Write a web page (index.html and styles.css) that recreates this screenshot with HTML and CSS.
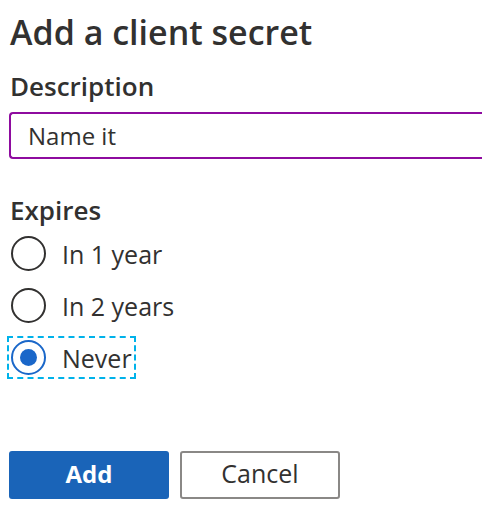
FILE: index.html
```html
<!DOCTYPE html>
<html>
<head>
<meta charset="utf-8">
<link rel="stylesheet" href="styles.css">
</head>
<body>
<div class="panel">
  <h1 class="title">Add a client secret</h1>
  <label class="label" for="desc">Description</label>
  <div class="input"><span class="input-text">Name it</span></div>
  <div class="label expires">Expires</div>
  <div class="radios">
    <div class="radio"><span class="circle"></span><span class="radio-text">In 1 year</span></div>
    <div class="radio"><span class="circle"></span><span class="radio-text">In 2 years</span></div>
    <div class="radio checked focused"><span class="circle"><span class="dot"></span></span><span class="radio-text">Never</span></div>
  </div>
  <div class="buttons">
    <button class="btn primary">Add</button>
    <button class="btn secondary">Cancel</button>
  </div>
</div>
</body>
</html>
```
FILE: styles.css
```css
html, body {
  margin: 0;
  padding: 0;
  background: #ffffff;
  overflow: hidden;
}
.panel {
  font-family: "Open Sans", "Noto Sans", sans-serif;
  color: #323130;
  padding: 0 0 0 9px;
}
.title {
  margin: 0;
  font-size: 34px;
  font-weight: 600;
  line-height: 40px;
  padding-top: 12px;
  padding-left: 1px;
  color: #323130;
}
.label {
  display: block;
  font-size: 26px;
  font-weight: 600;
  line-height: 32px;
  padding-left: 1px;
  margin-top: 18px;
}
.input {
  margin-top: 10px;
  height: 43px;
  border: 2px solid #8e0b9f;
  border-right: none;
  border-radius: 4px 0 0 4px;
  display: flex;
  align-items: center;
  padding-left: 17px;
}
.input-text {
  font-size: 24px;
}
.expires {
  margin-top: 35px;
}
.radios {
  display: flex;
  flex-direction: column;
  gap: 13px;
  margin-top: 8px;
}
.radio {
  display: flex;
  align-items: center;
  gap: 16px;
  height: 39px;
  padding-left: 2px;
  padding-right: 2px;
  width: max-content;
  box-sizing: border-box;
}
.circle {
  width: 35px;
  height: 35px;
  border: 2px solid #323130;
  border-radius: 50%;
  box-sizing: border-box;
  display: flex;
  align-items: center;
  justify-content: center;
}
.radio-text {
  font-size: 25px;
}
.checked .circle {
  border-color: #1a67c9;
}
.dot {
  width: 17px;
  height: 17px;
  border-radius: 50%;
  background: #1a67c9;
}
.focused {
  outline: 2px dashed #00b2ea;
  outline-offset: 0;
}
.buttons {
  display: flex;
  gap: 11px;
  margin-top: 74px;
}
.btn {
  width: 160px;
  height: 48px;
  border-radius: 3px;
  font-family: "Open Sans", "Noto Sans", sans-serif;
  font-size: 24px;
  padding: 0 0 4px;
  cursor: pointer;
}
.primary {
  background: #1a64b8;
  border: none;
  color: #ffffff;
  font-weight: 700;
}
.secondary {
  background: #ffffff;
  border: 2px solid #8a8886;
  color: #323130;
  font-size: 25px;
}
```
